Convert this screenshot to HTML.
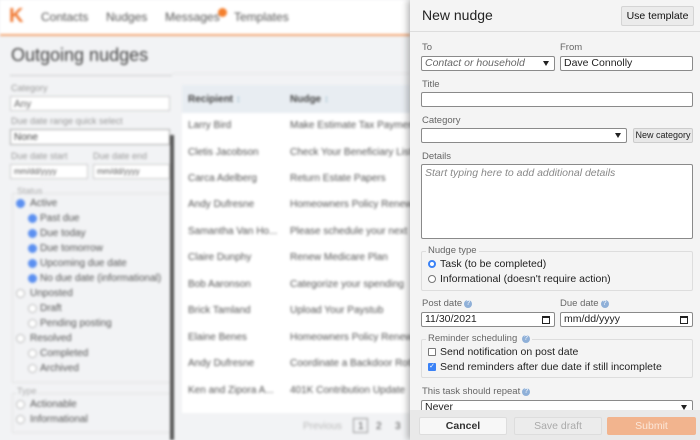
<!DOCTYPE html>
<html><head><meta charset="utf-8"><style>
*{box-sizing:border-box;margin:0;padding:0}
body{width:700px;height:440px;overflow:hidden;background:#f2f3f5;font-family:"Liberation Sans",sans-serif;position:relative}
.a{position:absolute}
#bg{position:absolute;left:0;top:0;width:700px;height:440px;filter:blur(1.2px);color:#555;font-size:10px}
.t{position:absolute;white-space:nowrap}
.cb{position:absolute;width:9px;height:9px;border-radius:50%}
.on{background:#5b8ff0}
.off{border:1px solid #bbb;background:#fff}
#p{position:absolute;left:410px;top:0;width:290px;height:440px;background:#f4f4f4;box-shadow:-3px 0 6px rgba(0,0,0,.25);font-size:10.5px;color:#222;white-space:nowrap}
.lbl{position:absolute;color:#666;font-size:9.5px}
.in{position:absolute;background:#fff;border:1px solid #8a8a8a;border-radius:2px;height:15px;font-size:10.5px;padding-left:3px;line-height:13px}
.arr{position:absolute;right:5px;top:4px;width:0;height:0;border-left:3.5px solid transparent;border-right:3.5px solid transparent;border-top:5px solid #222}
.fs{position:absolute;border:1px solid #ddd;border-radius:2px}
.leg{position:absolute;background:#f4f4f4;color:#666;font-size:9.5px;padding:0 2px}
.q{display:inline-block;width:8px;height:8px;border-radius:50%;background:#8fb0d8;color:#fff;font-size:7px;text-align:center;line-height:8px;vertical-align:1px;margin-left:2px}
.btn{position:absolute;border-radius:2px;text-align:center;font-size:10.5px;white-space:nowrap;overflow:hidden}
.cal{position:absolute;right:4px;top:3px;width:8px;height:8px;border:1px solid #222;border-top-width:2px}
</style></head><body>
<div id="bg">
 <div class="a" style="left:0;top:0;width:410px;height:34px;background:#fff"></div>
 <div class="a" style="left:0;top:34px;width:410px;height:2px;background:#f4a774"></div>
 <div class="t" style="left:9px;top:5px;font-size:20px;font-weight:bold;color:#f07a35">K</div>
 <div class="t" style="left:41px;top:10px;font-size:12px;color:#555">Contacts</div>
 <div class="t" style="left:106px;top:10px;font-size:12px;color:#555">Nudges</div>
 <div class="t" style="left:165px;top:10px;font-size:12px;color:#555">Messages</div>
 <div class="a" style="left:218px;top:8px;width:9px;height:9px;border-radius:50%;background:#f47f2e"></div>
 <div class="t" style="left:234px;top:10px;font-size:12px;color:#555">Templates</div>
 <div class="t" style="left:11px;top:45px;font-size:18px;color:#444">Outgoing nudges</div>
 <div class="a" style="left:10px;top:75px;width:162px;height:1px;background:#ccc"></div>
 <div class="a" style="left:172px;top:73px;width:238px;height:1px;background:#e5e5e5"></div>
 <div class="t" style="left:11px;top:83px;color:#999;font-size:9px">Category</div>
 <div class="a" style="left:10px;top:96px;width:160px;height:15px;background:#fff;border:1px solid #ccc"><span class="t" style="left:3px;top:2px;color:#666">Any</span></div>
 <div class="t" style="left:11px;top:116px;color:#999;font-size:9px">Due date range quick select</div>
 <div class="a" style="left:10px;top:129px;width:160px;height:16px;background:#fff;border:1px solid #aaa"><span class="t" style="left:3px;top:2px;color:#444">None</span></div>
 <div class="t" style="left:11px;top:151px;color:#999;font-size:9px">Due date start</div>
 <div class="t" style="left:93px;top:151px;color:#999;font-size:9px">Due date end</div>
 <div class="a" style="left:10px;top:164px;width:78px;height:15px;background:#fff;border:1px solid #ccc"><span class="t" style="left:3px;top:2px;font-size:8px">mm/dd/yyyy</span></div>
 <div class="a" style="left:93px;top:164px;width:77px;height:15px;background:#fff;border:1px solid #ccc"><span class="t" style="left:3px;top:2px;font-size:8px">mm/dd/yyyy</span></div>
 <div class="a" style="left:12px;top:193px;width:160px;height:190px;border:1px solid #e3e3e3"></div>
 <div class="t" style="left:17px;top:186px;color:#aaa;font-size:9px;background:#f2f3f5">Status</div>
 <div class="a" style="left:12px;top:393px;width:160px;height:40px;border:1px solid #e3e3e3"></div>
 <div class="t" style="left:17px;top:386px;color:#aaa;font-size:9px;background:#f2f3f5">Type</div>
 <div class="cb on" style="left:16px;top:199px"></div><div class="t" style="left:30px;top:198px">Active</div>
 <div class="cb on" style="left:28px;top:214px"></div><div class="t" style="left:40px;top:213px">Past due</div>
 <div class="cb on" style="left:28px;top:229px"></div><div class="t" style="left:40px;top:228px">Due today</div>
 <div class="cb on" style="left:28px;top:244px"></div><div class="t" style="left:40px;top:243px">Due tomorrow</div>
 <div class="cb on" style="left:28px;top:259px"></div><div class="t" style="left:40px;top:258px">Upcoming due date</div>
 <div class="cb on" style="left:28px;top:274px"></div><div class="t" style="left:40px;top:273px">No due date (informational)</div>
 <div class="cb off" style="left:16px;top:289px"></div><div class="t" style="left:30px;top:288px">Unposted</div>
 <div class="cb off" style="left:28px;top:304px"></div><div class="t" style="left:40px;top:303px">Draft</div>
 <div class="cb off" style="left:28px;top:319px"></div><div class="t" style="left:40px;top:318px">Pending posting</div>
 <div class="cb off" style="left:16px;top:334px"></div><div class="t" style="left:30px;top:333px">Resolved</div>
 <div class="cb off" style="left:28px;top:349px"></div><div class="t" style="left:40px;top:348px">Completed</div>
 <div class="cb off" style="left:28px;top:364px"></div><div class="t" style="left:40px;top:363px">Archived</div>
 <div class="cb off" style="left:16px;top:400px"></div><div class="t" style="left:30px;top:399px">Actionable</div>
 <div class="cb off" style="left:16px;top:415px"></div><div class="t" style="left:30px;top:414px">Informational</div>
 <div class="a" style="left:170px;top:135px;width:4px;height:305px;background:#555"></div>
 <div class="a" style="left:182px;top:85px;width:228px;height:28px;background:#e8edf2"></div>
 <div class="a" style="left:182px;top:113px;width:228px;height:300px;background:#fff"></div>
 <div class="t" style="left:188px;top:94px;font-weight:bold;color:#444">Recipient <span style="color:#9bc">↕</span></div>
 <div class="t" style="left:290px;top:94px;font-weight:bold;color:#444">Nudge <span style="color:#9bc">↕</span></div>
 <div class="t" style="left:188px;top:120px">Larry Bird</div><div class="t" style="left:290px;top:120px">Make Estimate Tax Payment</div>
 <div class="t" style="left:188px;top:147px">Cletis Jacobson</div><div class="t" style="left:290px;top:147px">Check Your Beneficiary List</div>
 <div class="t" style="left:188px;top:173px">Carca Adelberg</div><div class="t" style="left:290px;top:173px">Return Estate Papers</div>
 <div class="t" style="left:188px;top:199px">Andy Dufresne</div><div class="t" style="left:290px;top:199px">Homeowners Policy Renewal</div>
 <div class="t" style="left:188px;top:226px">Samantha Van Ho...</div><div class="t" style="left:290px;top:226px">Please schedule your next</div>
 <div class="t" style="left:188px;top:252px">Claire Dunphy</div><div class="t" style="left:290px;top:252px">Renew Medicare Plan</div>
 <div class="t" style="left:188px;top:279px">Bob Aaronson</div><div class="t" style="left:290px;top:279px">Categorize your spending</div>
 <div class="t" style="left:188px;top:305px">Brick Tamland</div><div class="t" style="left:290px;top:305px">Upload Your Paystub</div>
 <div class="t" style="left:188px;top:332px">Elaine Benes</div><div class="t" style="left:290px;top:332px">Homeowners Policy Renewal</div>
 <div class="t" style="left:188px;top:358px">Andy Dufresne</div><div class="t" style="left:290px;top:358px">Coordinate a Backdoor Roth</div>
 <div class="t" style="left:188px;top:385px">Ken and Zipora A...</div><div class="t" style="left:290px;top:385px">401K Contribution Update</div>
 <div class="t" style="left:303px;top:421px;color:#bbb">Previous</div>
 <div class="a" style="left:353px;top:418px;width:15px;height:15px;border:1px solid #999"></div>
 <div class="t" style="left:358px;top:421px">1</div><div class="t" style="left:376px;top:421px">2</div><div class="t" style="left:395px;top:421px">3</div>
</div>
<div id="p">
 <div class="a" style="left:12px;top:7px;font-size:14px;color:#222">New nudge</div>
 <div class="btn" style="left:211px;top:6px;width:73px;height:20px;background:#ebebeb;border:1px solid #d4d4d4;line-height:18px;font-size:10.5px;color:#111">Use template</div>
 <div class="a" style="left:0;top:31px;width:290px;height:1px;background:#ddd"></div>
 <div class="lbl" style="left:12px;top:42px">To</div>
 <div class="lbl" style="left:150px;top:42px">From</div>
 <div class="in" style="left:11px;top:56px;width:134px"><i style="color:#666">Contact or household</i><span class="arr"></span></div>
 <div class="in" style="left:150px;top:56px;width:133px">Dave Connolly</div>
 <div class="lbl" style="left:12px;top:79px">Title</div>
 <div class="in" style="left:11px;top:92px;width:272px"></div>
 <div class="lbl" style="left:12px;top:115px">Category</div>
 <div class="in" style="left:11px;top:128px;width:206px"><span class="arr"></span></div>
 <div class="btn" style="left:223px;top:128px;width:60px;height:15px;background:#e8e8e8;border:1px solid #ccc;line-height:13px;font-size:9px">New category</div>
 <div class="lbl" style="left:12px;top:151px">Details</div>
 <div class="in" style="left:11px;top:164px;width:272px;height:75px;padding-top:2px"><i style="color:#888">Start typing here to add additional details</i></div>
 <div class="fs" style="left:11px;top:251px;width:272px;height:40px"></div>
 <div class="leg" style="left:16px;top:245px">Nudge type</div>
 <div class="a" style="left:18px;top:260px;width:8px;height:8px;border-radius:50%;border:2.5px solid #3b82f6;background:#fff"></div>
 <div class="a" style="left:30px;top:258px">Task (to be completed)</div>
 <div class="a" style="left:18px;top:275px;width:8px;height:8px;border-radius:50%;border:1px solid #777;background:#fff"></div>
 <div class="a" style="left:30px;top:273px">Informational (doesn't require action)</div>
 <div class="lbl" style="left:12px;top:298px">Post date<span class="q">?</span></div>
 <div class="lbl" style="left:150px;top:298px">Due date<span class="q">?</span></div>
 <div class="in" style="left:11px;top:312px;width:134px">11/30/2021<span class="cal"></span></div>
 <div class="in" style="left:150px;top:312px;width:133px">mm/dd/yyyy<span class="cal"></span></div>
 <div class="fs" style="left:11px;top:339px;width:272px;height:39px"></div>
 <div class="leg" style="left:16px;top:333px">Reminder scheduling <span class="q">?</span></div>
 <div class="a" style="left:18px;top:348px;width:8px;height:8px;border:1px solid #777;background:#fff;border-radius:1px"></div>
 <div class="a" style="left:30px;top:346px">Send notification on post date</div>
 <div class="a" style="left:18px;top:363px;width:8px;height:8px;background:#3b82f6;border-radius:1px;color:#fff;font-size:7px;line-height:8px;text-align:center">✓</div>
 <div class="a" style="left:30px;top:361px">Send reminders after due date if still incomplete</div>
 <div class="lbl" style="left:12px;top:386px">This task should repeat<span class="q">?</span></div>
 <div class="in" style="left:11px;top:400px;width:272px;height:14px">Never<span class="arr"></span></div>
 <div class="a" style="left:0;top:410px;width:290px;height:30px;background:#e9e9e9"></div>
 <div class="btn" style="left:9px;top:417px;width:88px;height:18px;background:#f7f7f7;border:1px solid #ddd;line-height:16px;font-weight:bold;color:#333">Cancel</div>
 <div class="btn" style="left:104px;top:417px;width:88px;height:18px;background:#ececec;border:1px solid #ddd;line-height:16px;color:#aaa">Save draft</div>
 <div class="btn" style="left:197px;top:417px;width:89px;height:18px;background:#f2b48e;line-height:18px;color:#fbe6d8">Submit</div>
</div>
</body></html>
